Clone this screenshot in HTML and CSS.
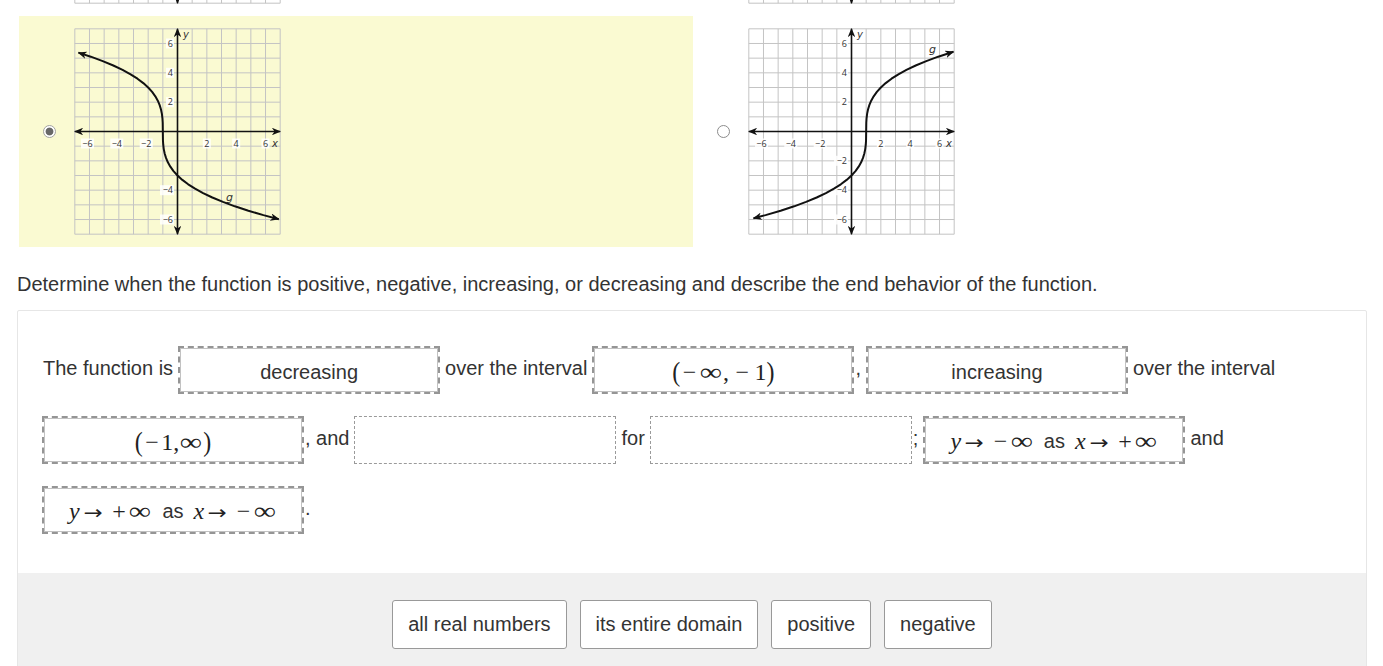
FILE: index.html
```html
<!DOCTYPE html>
<html>
<head>
<meta charset="utf-8">
<title>Function behavior</title>
<link rel="stylesheet" href="styles.css">
</head>
<body>
<svg class="svg-defs" width="0" height="0" aria-hidden="true">
  <defs>
    <marker id="ar" viewBox="0 0 12 10" refX="11" refY="5" markerWidth="0.62" markerHeight="0.52" markerUnits="userSpaceOnUse" orient="auto-start-reverse">
      <path d="M0 0L12 5L0 10L3.5 5Z" fill="#111"/>
    </marker>
  </defs>
</svg>
<div class="page">
  <div class="options prev">
    <div class="option">
      <span class="radio-space"></span>
      <svg class="graph" viewBox="0 0 207 207" width="207" height="207">
        <g transform="translate(103.5 103.5) scale(14.67)">
          <path class="grid" d="M-7-7V7M-6-7V7M-5-7V7M-4-7V7M-3-7V7M-2-7V7M-1-7V7M1-7V7M2-7V7M3-7V7M4-7V7M5-7V7M6-7V7M7-7V7M-7-7H7M-7-6H7M-7-5H7M-7-4H7M-7-3H7M-7-2H7M-7-1H7M-7 1H7M-7 2H7M-7 3H7M-7 4H7M-7 5H7M-7 6H7M-7 7H7"/>
          <path class="axis" d="M0 -7V7" marker-start="url(#ar)" marker-end="url(#ar)"/>
        </g>
      </svg>
    </div>
    <div class="option">
      <span class="radio-space"></span>
      <svg class="graph" viewBox="0 0 207 207" width="207" height="207">
        <g transform="translate(103.5 103.5) scale(14.67)">
          <path class="grid" d="M-7-7V7M-6-7V7M-5-7V7M-4-7V7M-3-7V7M-2-7V7M-1-7V7M1-7V7M2-7V7M3-7V7M4-7V7M5-7V7M6-7V7M7-7V7M-7-7H7M-7-6H7M-7-5H7M-7-4H7M-7-3H7M-7-2H7M-7-1H7M-7 1H7M-7 2H7M-7 3H7M-7 4H7M-7 5H7M-7 6H7M-7 7H7"/>
          <path class="axis" d="M0 -7V7" marker-start="url(#ar)" marker-end="url(#ar)"/>
        </g>
      </svg>
    </div>
  </div>

  <div class="options">
    <div class="option selected">
      <span class="radio checked"></span>
      <svg class="graph" viewBox="0 0 207 207" width="207" height="207">
        <g transform="translate(103.5 103.5) scale(14.67)">
          <path class="grid" d="M-7-7V7M-6-7V7M-5-7V7M-4-7V7M-3-7V7M-2-7V7M-1-7V7M1-7V7M2-7V7M3-7V7M4-7V7M5-7V7M6-7V7M7-7V7M-7-7H7M-7-6H7M-7-5H7M-7-4H7M-7-3H7M-7-2H7M-7-1H7M-7 1H7M-7 2H7M-7 3H7M-7 4H7M-7 5H7M-7 6H7M-7 7H7"/>
        </g>
        <g class="lbl-bgs">
          <rect x="7" y="110.5" width="13" height="10"/>
          <rect x="36.3" y="110.5" width="13" height="10"/>
          <rect x="65.7" y="110.5" width="13" height="10"/>
          <rect x="128.8" y="110.5" width="8" height="10"/>
          <rect x="158.2" y="110.5" width="8" height="10"/>
          <rect x="187.5" y="110.5" width="8" height="10"/>
          <rect x="92" y="10.5" width="8" height="10"/>
          <rect x="92" y="39.8" width="8" height="10"/>
          <rect x="92" y="69.2" width="8" height="10"/>
          <rect x="86" y="157.2" width="14" height="10"/>
          <rect x="86" y="186.5" width="14" height="10"/>
        </g>
        <g class="lbl">
          <text x="13.5" y="119" text-anchor="middle">−6</text>
          <text x="42.8" y="119" text-anchor="middle">−4</text>
          <text x="72.2" y="119" text-anchor="middle">−2</text>
          <text x="132.8" y="119" text-anchor="middle">2</text>
          <text x="162.2" y="119" text-anchor="middle">4</text>
          <text x="191.5" y="119" text-anchor="middle">6</text>
          <text x="99" y="18.7" text-anchor="end">6</text>
          <text x="99" y="48" text-anchor="end">4</text>
          <text x="99" y="77.4" text-anchor="end">2</text>
          <text x="99" y="165.4" text-anchor="end">−4</text>
          <text x="99" y="194.7" text-anchor="end">−6</text>
        </g>
        <text class="var" x="198" y="119">x</text>
        <text class="var" x="109" y="10">y</text>
        <text class="var g" x="152" y="173">g</text>
        <g transform="translate(103.5 103.5) scale(14.67)">
          <path class="axis" d="M-7 0H7" marker-start="url(#ar)" marker-end="url(#ar)"/>
          <path class="axis" d="M0 -7V7" marker-start="url(#ar)" marker-end="url(#ar)"/>
        </g>
        <g transform="translate(103.5 103.5) scale(14.67 -14.67)">
          <polyline class="curve" marker-start="url(#ar)" marker-end="url(#ar)" points="-6.755,5.376 -5.913,5.1 -5.096,4.8 -4.375,4.5 -3.744,4.2 -3.197,3.9 -2.728,3.6 -2.331,3.3 -2,3 -1.729,2.7 -1.512,2.4 -1.343,2.1 -1.216,1.8 -1.125,1.5 -1.064,1.2 -1.027,0.9 -1.008,0.6 -1,0 -0.992,-0.6 -0.973,-0.9 -0.936,-1.2 -0.875,-1.5 -0.784,-1.8 -0.657,-2.1 -0.488,-2.4 -0.271,-2.7 0,-3 0.331,-3.3 0.728,-3.6 1.197,-3.9 1.744,-4.2 2.375,-4.5 3.096,-4.8 3.913,-5.1 4.832,-5.4 5.859,-5.7 6.904,-5.976"/>
        </g>
      </svg>
    </div>
    <div class="option">
      <span class="radio"></span>
      <svg class="graph" viewBox="0 0 207 207" width="207" height="207">
        <g transform="translate(103.5 103.5) scale(14.67)">
          <path class="grid" d="M-7-7V7M-6-7V7M-5-7V7M-4-7V7M-3-7V7M-2-7V7M-1-7V7M1-7V7M2-7V7M3-7V7M4-7V7M5-7V7M6-7V7M7-7V7M-7-7H7M-7-6H7M-7-5H7M-7-4H7M-7-3H7M-7-2H7M-7-1H7M-7 1H7M-7 2H7M-7 3H7M-7 4H7M-7 5H7M-7 6H7M-7 7H7"/>
        </g>
        <g class="lbl-bgs">
          <rect x="7" y="110.5" width="13" height="10"/>
          <rect x="36.3" y="110.5" width="13" height="10"/>
          <rect x="65.7" y="110.5" width="13" height="10"/>
          <rect x="128.8" y="110.5" width="8" height="10"/>
          <rect x="158.2" y="110.5" width="8" height="10"/>
          <rect x="187.5" y="110.5" width="8" height="10"/>
          <rect x="92" y="10.5" width="8" height="10"/>
          <rect x="92" y="39.8" width="8" height="10"/>
          <rect x="92" y="69.2" width="8" height="10"/>
          <rect x="86" y="127.8" width="14" height="10"/>
          <rect x="86" y="157.2" width="14" height="10"/>
          <rect x="86" y="186.5" width="14" height="10"/>
        </g>
        <g class="lbl">
          <text x="13.5" y="119" text-anchor="middle">−6</text>
          <text x="42.8" y="119" text-anchor="middle">−4</text>
          <text x="72.2" y="119" text-anchor="middle">−2</text>
          <text x="132.8" y="119" text-anchor="middle">2</text>
          <text x="162.2" y="119" text-anchor="middle">4</text>
          <text x="191.5" y="119" text-anchor="middle">6</text>
          <text x="99" y="18.7" text-anchor="end">6</text>
          <text x="99" y="48" text-anchor="end">4</text>
          <text x="99" y="77.4" text-anchor="end">2</text>
          <text x="99" y="136" text-anchor="end">−2</text>
          <text x="99" y="165.4" text-anchor="end">−4</text>
          <text x="99" y="194.7" text-anchor="end">−6</text>
        </g>
        <text class="var" x="198" y="119">x</text>
        <text class="var" x="109" y="10">y</text>
        <text class="var g" x="181" y="25">g</text>
        <g transform="translate(103.5 103.5) scale(14.67)">
          <path class="axis" d="M-7 0H7" marker-start="url(#ar)" marker-end="url(#ar)"/>
          <path class="axis" d="M0 -7V7" marker-start="url(#ar)" marker-end="url(#ar)"/>
        </g>
        <g transform="translate(103.5 103.5) scale(14.67 -14.67)">
          <polyline class="curve" marker-start="url(#ar)" marker-end="url(#ar)" points="-6.68,-5.919 -5.859,-5.7 -4.832,-5.4 -3.913,-5.1 -3.096,-4.8 -2.375,-4.5 -1.744,-4.2 -1.197,-3.9 -0.728,-3.6 -0.331,-3.3 0,-3 0.271,-2.7 0.488,-2.4 0.657,-2.1 0.784,-1.8 0.875,-1.5 0.936,-1.2 0.973,-0.9 0.992,-0.6 1,0 1.008,0.6 1.027,0.9 1.064,1.2 1.125,1.5 1.216,1.8 1.343,2.1 1.512,2.4 1.729,2.7 2,3 2.331,3.3 2.728,3.6 3.197,3.9 3.744,4.2 4.375,4.5 5.096,4.8 5.913,5.1 6.95,5.436"/>
        </g>
      </svg>
    </div>
  </div>

  <p class="prompt">Determine when the function is positive, negative, increasing, or decreasing and describe the end behavior of the function.</p>

  <div class="question">
    <div class="sentence">
      <span class="t first">The function is</span>
      <span class="zone filled"><span class="word">decreasing</span></span>
      <span class="t">over the interval</span>
      <span class="zone filled"><span class="math"><span class="par">(</span><span class="mi">−</span><span class="inf">∞</span>,<span class="mi bin">−</span>1<span class="par">)</span></span></span>
      <span class="t punct">,</span>
      <span class="zone filled"><span class="word">increasing</span></span>
      <span class="t">over the interval</span>
      <span class="zone filled"><span class="math"><span class="par">(</span><span class="mi">−</span>1,<span class="inf">∞</span><span class="par">)</span></span></span>
      <span class="t punct">, and</span>
      <span class="zone"></span>
      <span class="t">for</span>
      <span class="zone"></span>
      <span class="t punct">;</span>
      <span class="zone filled"><span class="math"><i>y</i><span class="rel">→</span><span class="mi">−</span><span class="inf">∞</span></span><span class="as">as</span><span class="math"><i>x</i><span class="rel">→</span><span class="mi">+</span><span class="inf">∞</span></span></span>
      <span class="t">and</span>
      <span class="zone filled"><span class="math"><i>y</i><span class="rel">→</span><span class="mi">+</span><span class="inf">∞</span></span><span class="as">as</span><span class="math"><i>x</i><span class="rel">→</span><span class="mi">−</span><span class="inf">∞</span></span></span>
      <span class="t punct">.</span>
    </div>
    <div class="bank">
      <button class="chip" type="button">all real numbers</button>
      <button class="chip" type="button">its entire domain</button>
      <button class="chip" type="button">positive</button>
      <button class="chip" type="button">negative</button>
    </div>
  </div>
</div>
</body>
</html>
```

FILE: styles.css
```css
html, body {
  margin: 0;
  padding: 0;
  background: #fff;
}

body {
  font-family: "Liberation Sans", Arial, sans-serif;
  font-size: 20px;
  color: #333;
  overflow: hidden;
}

.svg-defs {
  display: block;
  width: 0;
  height: 0;
}

.page {
  padding: 0 16px 0 17px;
}

/* ---------- graph options ---------- */
.options {
  display: flex;
  margin-left: 2px;
}

.options.prev {
  height: 16px;
  overflow: hidden;
}

.option {
  flex: 1 1 0;
  display: flex;
  align-items: center;
  padding: 12px 0 12px 24px;
}

.prev .option {
  align-items: flex-end;
  height: 16px;
  box-sizing: border-box;
  padding: 0 0 12px 24px;
}

.option.selected {
  background: #fafad2;
}

.radio,
.radio-space {
  flex: none;
  width: 13px;
  height: 13px;
  margin-right: 18px;
}

.radio {
  box-sizing: border-box;
  border: 1px solid #8c8c8c;
  border-radius: 50%;
  background: #fff;
}

.radio.checked {
  border-color: #a3a3a3;
  background: radial-gradient(circle, #686868 0, #686868 3.5px, #fff 4.3px);
}

.graph {
  flex: none;
  display: block;
  width: 207px;
  height: 207px;
  overflow: visible;
}

.grid {
  fill: none;
  stroke: #c4c4c4;
  stroke-width: 1;
  vector-effect: non-scaling-stroke;
}

.axis {
  fill: none;
  stroke: #111;
  stroke-width: 1.6;
  vector-effect: non-scaling-stroke;
}

.curve {
  fill: none;
  stroke: #111;
  stroke-width: 2;
  stroke-linejoin: round;
  vector-effect: non-scaling-stroke;
}

.lbl-bgs rect {
  fill: #fff;
  opacity: 0.85;
}

.lbl text {
  font-family: "Open Sans", "DejaVu Sans", sans-serif;
  font-size: 9px;
  fill: #333;
}

.var {
  font-family: "DejaVu Sans", "Open Sans", sans-serif;
  font-style: italic;
  font-size: 10px;
  fill: #333;
}

.var.g {
  font-size: 11px;
}

/* ---------- prompt ---------- */
.prompt {
  margin: 26px 0 15px;
  line-height: 22px;
  font-size: 20px;
  color: #333;
}

/* ---------- question box ---------- */
.question {
  border: 1px solid #e6e6e6;
  border-radius: 2px;
}

.sentence {
  display: flex;
  flex-wrap: wrap;
  align-items: flex-start;
  row-gap: 22px;
  padding: 35px 24px 39px 24px;
}

.t {
  line-height: 22px;
  padding-top: 11px;
  margin: 0 5px;
  white-space: nowrap;
  color: #333;
}

.t.first {
  margin-left: 0;
  padding-left: 1px;
}

.t.punct {
  margin-left: 1px;
}

.zone {
  flex: none;
  box-sizing: border-box;
  width: 262px;
  height: 48px;
  border: 1px dashed #9a9a9a;
  display: flex;
  align-items: center;
  justify-content: center;
  padding-top: 3px;
  background: #fff;
}

.zone.filled {
  border: 2px dashed #959595;
  box-shadow: inset 0 0 0 1px #c2c2c2;
}

.word {
  font-size: 20px;
  color: #333;
  line-height: 24px;
}

.math {
  font-family: "Liberation Serif", "DejaVu Serif", serif;
  font-size: 24px;
  line-height: 28px;
  color: #222;
  white-space: nowrap;
}

.math i {
  font-style: italic;
}

.par {
  display: inline-block;
  transform: scaleY(1.12);
}

.mi {
  display: inline-block;
  width: 0.778em;
  text-align: center;
}

.mi.bin {
  margin-left: 4px;
  margin-right: 3px;
}

.inf {
  display: inline-block;
  width: 1em;
  text-align: center;
  transform: scaleX(1.3);
}

.rel {
  display: inline-block;
  width: 22px;
  text-align: center;
  font-family: "DejaVu Sans", sans-serif;
  font-size: 19px;
  transform: scaleX(1.2);
  margin: 0 6px 0 2px;
}

.as {
  font-family: "Liberation Sans", Arial, sans-serif;
  font-size: 20px;
  color: #333;
  margin: 0 10px;
}

/* ---------- answer bank ---------- */
.bank {
  background: #f0f0f0;
  display: flex;
  justify-content: center;
  gap: 13px;
  padding: 27px 0 30px;
}

.chip {
  font-family: "Liberation Sans", Arial, sans-serif;
  font-size: 20px;
  color: #333;
  background: #fff;
  border: 1px solid #999;
  border-radius: 3px;
  height: 49px;
  padding: 0 15px;
  margin: 0;
}
```
